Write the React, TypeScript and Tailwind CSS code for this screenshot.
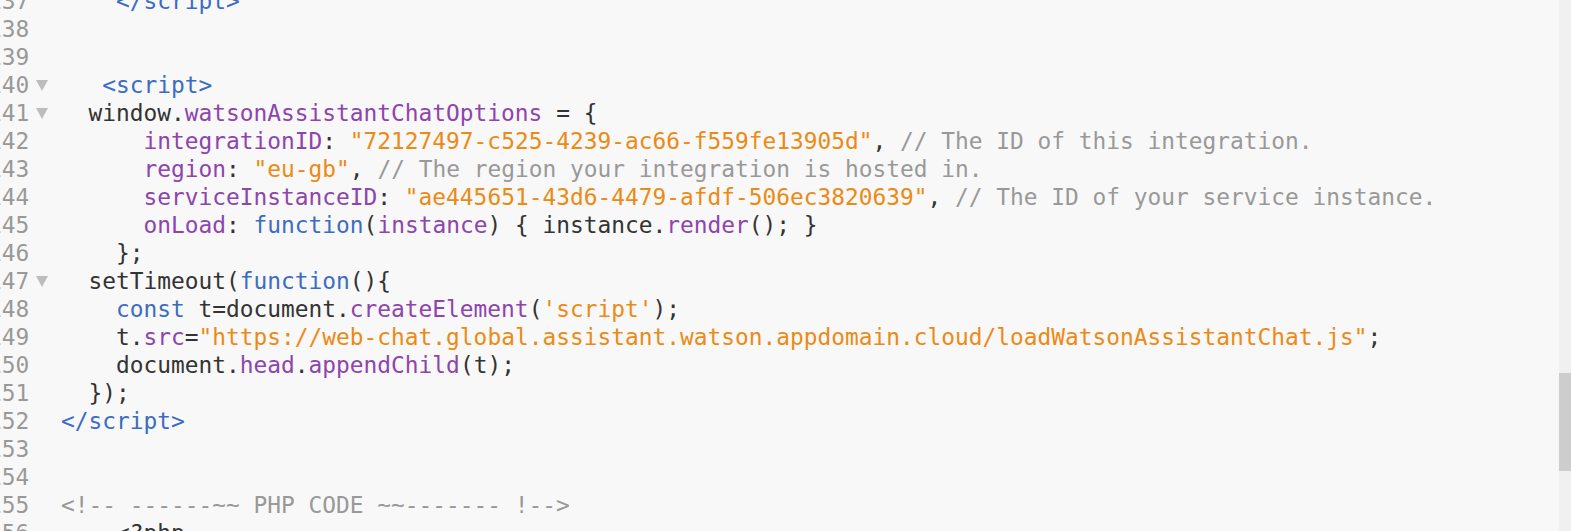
import React from "react";

type Tok = [string, string];

const D = "text-[#333333]";
const P = "text-[#8e44ad]";
const B = "text-[#3b6cc4]";
const O = "text-[#ec8a14]";
const C = "text-[#999999]";

const lines: { n: number; fold?: boolean; toks: Tok[] }[] = [
  { n: 137, toks: [["    </script>", B]] },
  { n: 138, toks: [] },
  { n: 139, toks: [] },
  { n: 140, fold: true, toks: [["   <script>", B]] },
  {
    n: 141,
    fold: true,
    toks: [
      ["  window.", D],
      ["watsonAssistantChatOptions", P],
      [" = {", D],
    ],
  },
  {
    n: 142,
    toks: [
      ["      ", D],
      ["integrationID", P],
      [": ", D],
      ['"72127497-c525-4239-ac66-f559fe13905d"', O],
      [", ", D],
      ["// The ID of this integration.", C],
    ],
  },
  {
    n: 143,
    toks: [
      ["      ", D],
      ["region", P],
      [": ", D],
      ['"eu-gb"', O],
      [", ", D],
      ["// The region your integration is hosted in.", C],
    ],
  },
  {
    n: 144,
    toks: [
      ["      ", D],
      ["serviceInstanceID", P],
      [": ", D],
      ['"ae445651-43d6-4479-afdf-506ec3820639"', O],
      [", ", D],
      ["// The ID of your service instance.", C],
    ],
  },
  {
    n: 145,
    toks: [
      ["      ", D],
      ["onLoad", P],
      [": ", D],
      ["function", B],
      ["(", D],
      ["instance", P],
      [") { instance.", D],
      ["render", P],
      ["(); }", D],
    ],
  },
  { n: 146, toks: [["    };", D]] },
  {
    n: 147,
    fold: true,
    toks: [
      ["  setTimeout(", D],
      ["function", B],
      ["(){", D],
    ],
  },
  {
    n: 148,
    toks: [
      ["    ", D],
      ["const", B],
      [" t=document.", D],
      ["createElement", P],
      ["(", D],
      ["'script'", O],
      [");", D],
    ],
  },
  {
    n: 149,
    toks: [
      ["    t.", D],
      ["src", P],
      ["=", D],
      ['"https://web-chat.global.assistant.watson.appdomain.cloud/loadWatsonAssistantChat.js"', O],
      [";", D],
    ],
  },
  {
    n: 150,
    toks: [
      ["    document.", D],
      ["head", P],
      [".", D],
      ["appendChild", P],
      ["(t);", D],
    ],
  },
  { n: 151, toks: [["  });", D]] },
  { n: 152, toks: [["</script>", B]] },
  { n: 153, toks: [] },
  { n: 154, toks: [] },
  { n: 155, toks: [["<!-- ------~~ PHP CODE ~~------- !-->", C]] },
  { n: 156, toks: [["    <?php", D]] },
];

export default function App() {
  return (
    <div className="flex h-[531px] w-full overflow-hidden bg-[#f8f8f8]">
      <div className="flex-1 overflow-hidden">
        <div
          className="-ml-[12px] -mt-[13px] text-[22.85px] leading-[28px] whitespace-pre"
          style={{ fontFamily: '"DejaVu Sans Mono", "Liberation Mono", monospace' }}
        >
          {lines.map((l) => (
            <div key={l.n} className="flex h-[28px]">
              <div className="w-[41px] shrink-0 text-right text-[#999999]">{l.n}</div>
              <div className="flex w-[32px] shrink-0 items-center pl-[7px]">
                {l.fold && (
                  <svg width="12" height="11" viewBox="0 0 12 11">
                    <path d="M0 0 H12 L6 11 Z" fill="#bdbdbd" />
                  </svg>
                )}
              </div>
              <div>
                {l.toks.map((t, i) => (
                  <span key={i} className={t[1]}>
                    {t[0]}
                  </span>
                ))}
              </div>
            </div>
          ))}
        </div>
      </div>
      <div className="w-[12px] shrink-0 bg-[#f0f0f0]">
        <div className="mt-[373px] h-[98px] bg-[#cdcdcd]" />
      </div>
    </div>
  );
}
